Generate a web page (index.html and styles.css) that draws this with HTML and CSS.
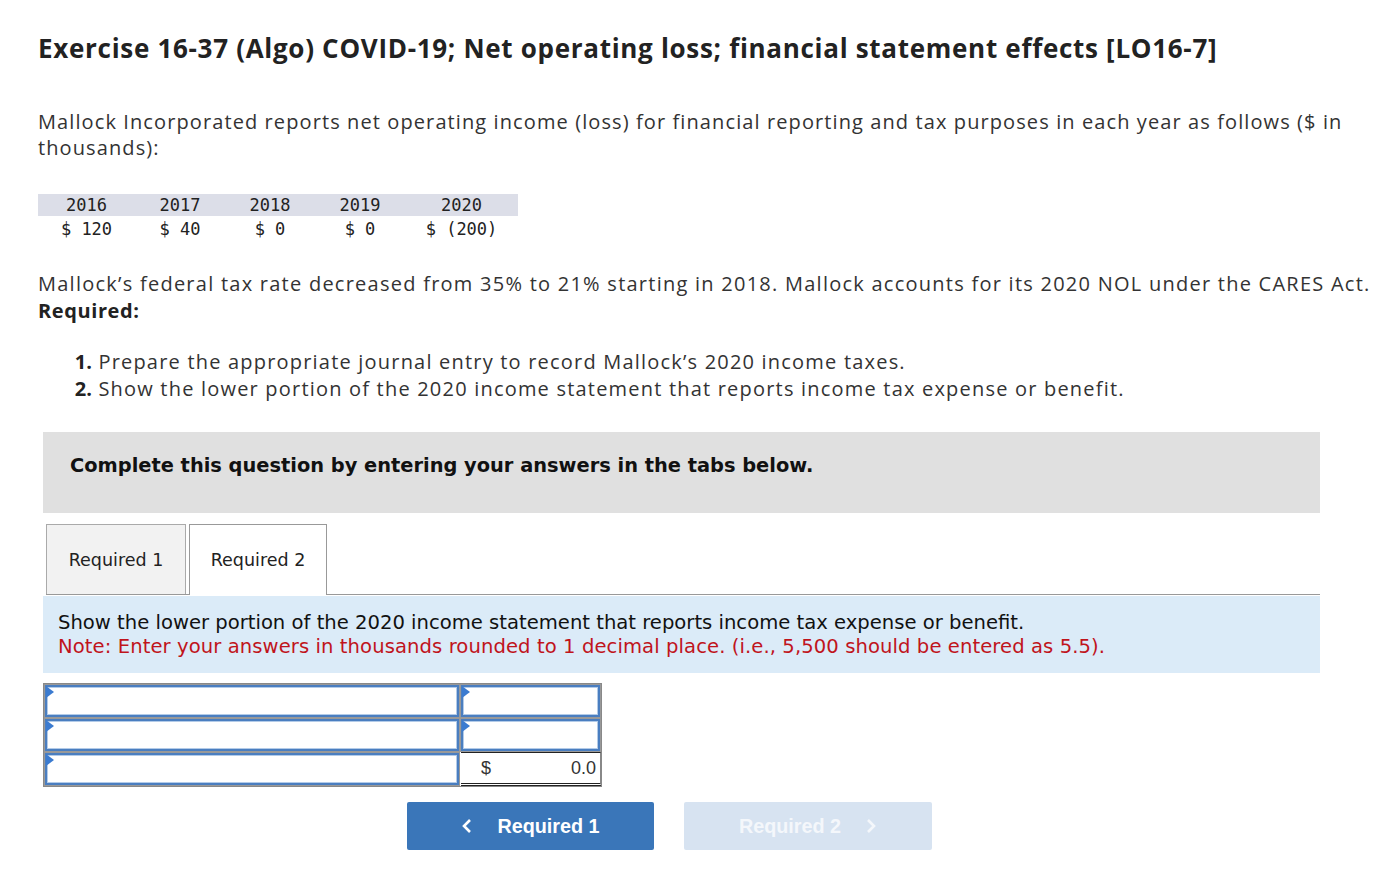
FILE: index.html
```html
<!DOCTYPE html>
<html>
<head>
<meta charset="utf-8">
<link rel="stylesheet" href="styles.css">
</head>
<body>
<div class="page">
  <h1 class="title">Exercise 16-37 (Algo) COVID-19; Net operating loss; financial statement effects [LO16-7]</h1>
  <p class="intro">Mallock Incorporated reports net operating income (loss) for financial reporting and tax purposes in each year as follows ($ in thousands):</p>
  <table class="data">
    <thead>
      <tr><th>2016</th><th>2017</th><th>2018</th><th>2019</th><th>2020</th></tr>
    </thead>
    <tbody>
      <tr><td>$ 120</td><td>$ 40</td><td>$ 0</td><td>$ 0</td><td>$ (200)</td></tr>
    </tbody>
  </table>
  <p class="rate">Mallock’s federal tax rate decreased from 35% to 21% starting in 2018. Mallock accounts for its 2020 NOL under the CARES Act.<br><b>Required:</b></p>
  <ol class="reqs">
    <li><b class="num">1.</b> Prepare the appropriate journal entry to record Mallock’s 2020 income taxes.</li>
    <li><b class="num">2.</b> Show the lower portion of the 2020 income statement that reports income tax expense or benefit.</li>
  </ol>
  <div class="complete">Complete this question by entering your answers in the tabs below.</div>
  <div class="tabs">
    <div class="tab">Required 1</div>
    <div class="tab active">Required 2</div>
  </div>
  <div class="instructions">
    <div>Show the lower portion of the 2020 income statement that reports income tax expense or benefit.</div>
    <div class="note">Note: Enter your answers in thousands rounded to 1 decimal place. (i.e., 5,500 should be entered as 5.5).</div>
  </div>
  <div class="entry">
    <div class="cell lbl"><div class="inp"><span class="flag"></span></div></div>
    <div class="cell amt"><div class="inp"><span class="flag"></span></div></div>
    <div class="cell lbl"><div class="inp"><span class="flag"></span></div></div>
    <div class="cell amt"><div class="inp"><span class="flag"></span></div></div>
    <div class="cell lbl"><div class="inp"><span class="flag"></span></div></div>
    <div class="cell total"><span class="cur">$</span><span class="val">0.0</span></div>
  </div>
  <div class="nav">
    <button class="btn prev"><svg width="12" height="16" viewBox="0 0 12 16"><path d="M9 2 L3 8 L9 14" fill="none" stroke="#fff" stroke-width="2.6"/></svg><span>Required 1</span></button>
    <button class="btn next"><span>Required 2</span><svg width="12" height="16" viewBox="0 0 12 16"><path d="M3 2 L9 8 L3 14" fill="none" stroke="#fff" stroke-width="2.6"/></svg></button>
  </div>
</div>
</body>
</html>
```
FILE: styles.css
```css
html, body { margin: 0; padding: 0; background: #fff; }
body { font-family: "Open Sans", "Lato", sans-serif; color: #222; }
.page { padding: 22px 0 0 38px; width: 1340px; }
.title { font-size: 26px; font-weight: 700; margin: 10px 0 0; line-height: 32px; color: #222; letter-spacing: 0.7px; }
.intro { font-size: 20px; line-height: 26px; margin: 45px 0 0; color: #333; letter-spacing: 1.1px; width: 1330px; }
.data { border-collapse: collapse; margin-top: 33px; font-family: "DejaVu Sans Mono", monospace; font-size: 17px; color: #222; }
.data th { background: #dcdee8; font-weight: 400; height: 22px; padding: 0; line-height: 22px; }
.data td { height: 21px; padding: 3px 0 0; text-align: center; vertical-align: top; line-height: 21px; }
.data th:nth-child(1), .data td:nth-child(1) { width: 97px; }
.data th:nth-child(2), .data td:nth-child(2) { width: 90px; }
.data th:nth-child(3), .data td:nth-child(3) { width: 90px; }
.data th:nth-child(4), .data td:nth-child(4) { width: 90px; }
.data th:nth-child(5), .data td:nth-child(5) { width: 113px; }
.rate { font-size: 20px; line-height: 27px; margin: 30px 0 0; color: #333; letter-spacing: 1.25px; white-space: nowrap; }
.rate b { color: #222; letter-spacing: 0.6px; }
.reqs { list-style: none; margin: 24px 0 0; padding: 0 0 0 34px; font-size: 20px; line-height: 27px; color: #333; letter-spacing: 1.2px; }
.reqs .num { color: #222; display: inline-block; width: 20px; text-align: right; letter-spacing: 0; }
.complete { margin: 30px 0 0 5px; width: 1277px; height: 81px; background: #e0e0e0; box-sizing: border-box; padding: 20px 0 0 27px; font-family: "DejaVu Sans", Verdana, sans-serif; font-weight: 700; font-size: 19.4px; line-height: 28px; color: #111; }
.tabs { display: flex; gap: 3px; margin: 11px 0 0 8px; border-bottom: 1px solid #999; width: 1274px; }
.tab { width: 140px; height: 70px; box-sizing: border-box; border: 1px solid #aaa; border-bottom: none; background: #f2f2f2; font-family: "DejaVu Sans", Verdana, sans-serif; font-size: 17.5px; color: #222; display: flex; align-items: center; justify-content: center; }
.tab.active { background: #fff; width: 138px; margin-bottom: -1px; height: 71px; border-color: #999; }
.instructions { margin: 1px 0 0 5px; width: 1277px; height: 77px; background: #dbebf8; box-sizing: border-box; padding: 15px 0 0 15px; font-family: "DejaVu Sans", Verdana, sans-serif; font-size: 19.6px; line-height: 24px; color: #111; }
.note { color: #c0141c; letter-spacing: 0.08px; }
.entry { margin: 10px 0 0 5px; width: 559px; box-sizing: border-box; border: 1px solid #888; display: grid; grid-template-columns: 416px 141px; grid-auto-rows: 34px; }
.cell { border: 1px solid #999; box-sizing: border-box; position: relative; }
.inp { position: absolute; inset: 0; border: 2px solid #4a7ec0; box-shadow: inset 0 0 0 1px #b3cbe8; background: #fff; }
.flag { position: absolute; left: -1px; top: -1px; width: 0; height: 0; border-top: 6px solid transparent; border-bottom: 6px solid transparent; border-left: 8px solid #3b7bd0; }
.cell.total { border: none; border-top: 1px solid #222; border-right: 1px solid #888; border-bottom: 3px double #222; font-family: "Liberation Sans", Arial, sans-serif; font-size: 18px; color: #333; padding: 0 4px 0 20px; display: flex; justify-content: space-between; align-items: center; margin-left: 1px; }
.nav { display: flex; gap: 30px; margin: 15px 0 0 369px; }
.btn { width: 247px; height: 48px; border: none; border-radius: 2px; font-family: "Liberation Sans", Arial, sans-serif; font-weight: 700; font-size: 19.8px; color: #fff; display: flex; align-items: center; justify-content: center; gap: 24px; padding: 0; }
.btn.prev { background: #3a76b9; }
.btn.next { background: #d7e3f1; color: #f4f7fb; width: 248px; }
.btn.next svg path { stroke: #f4f7fb; }
```
